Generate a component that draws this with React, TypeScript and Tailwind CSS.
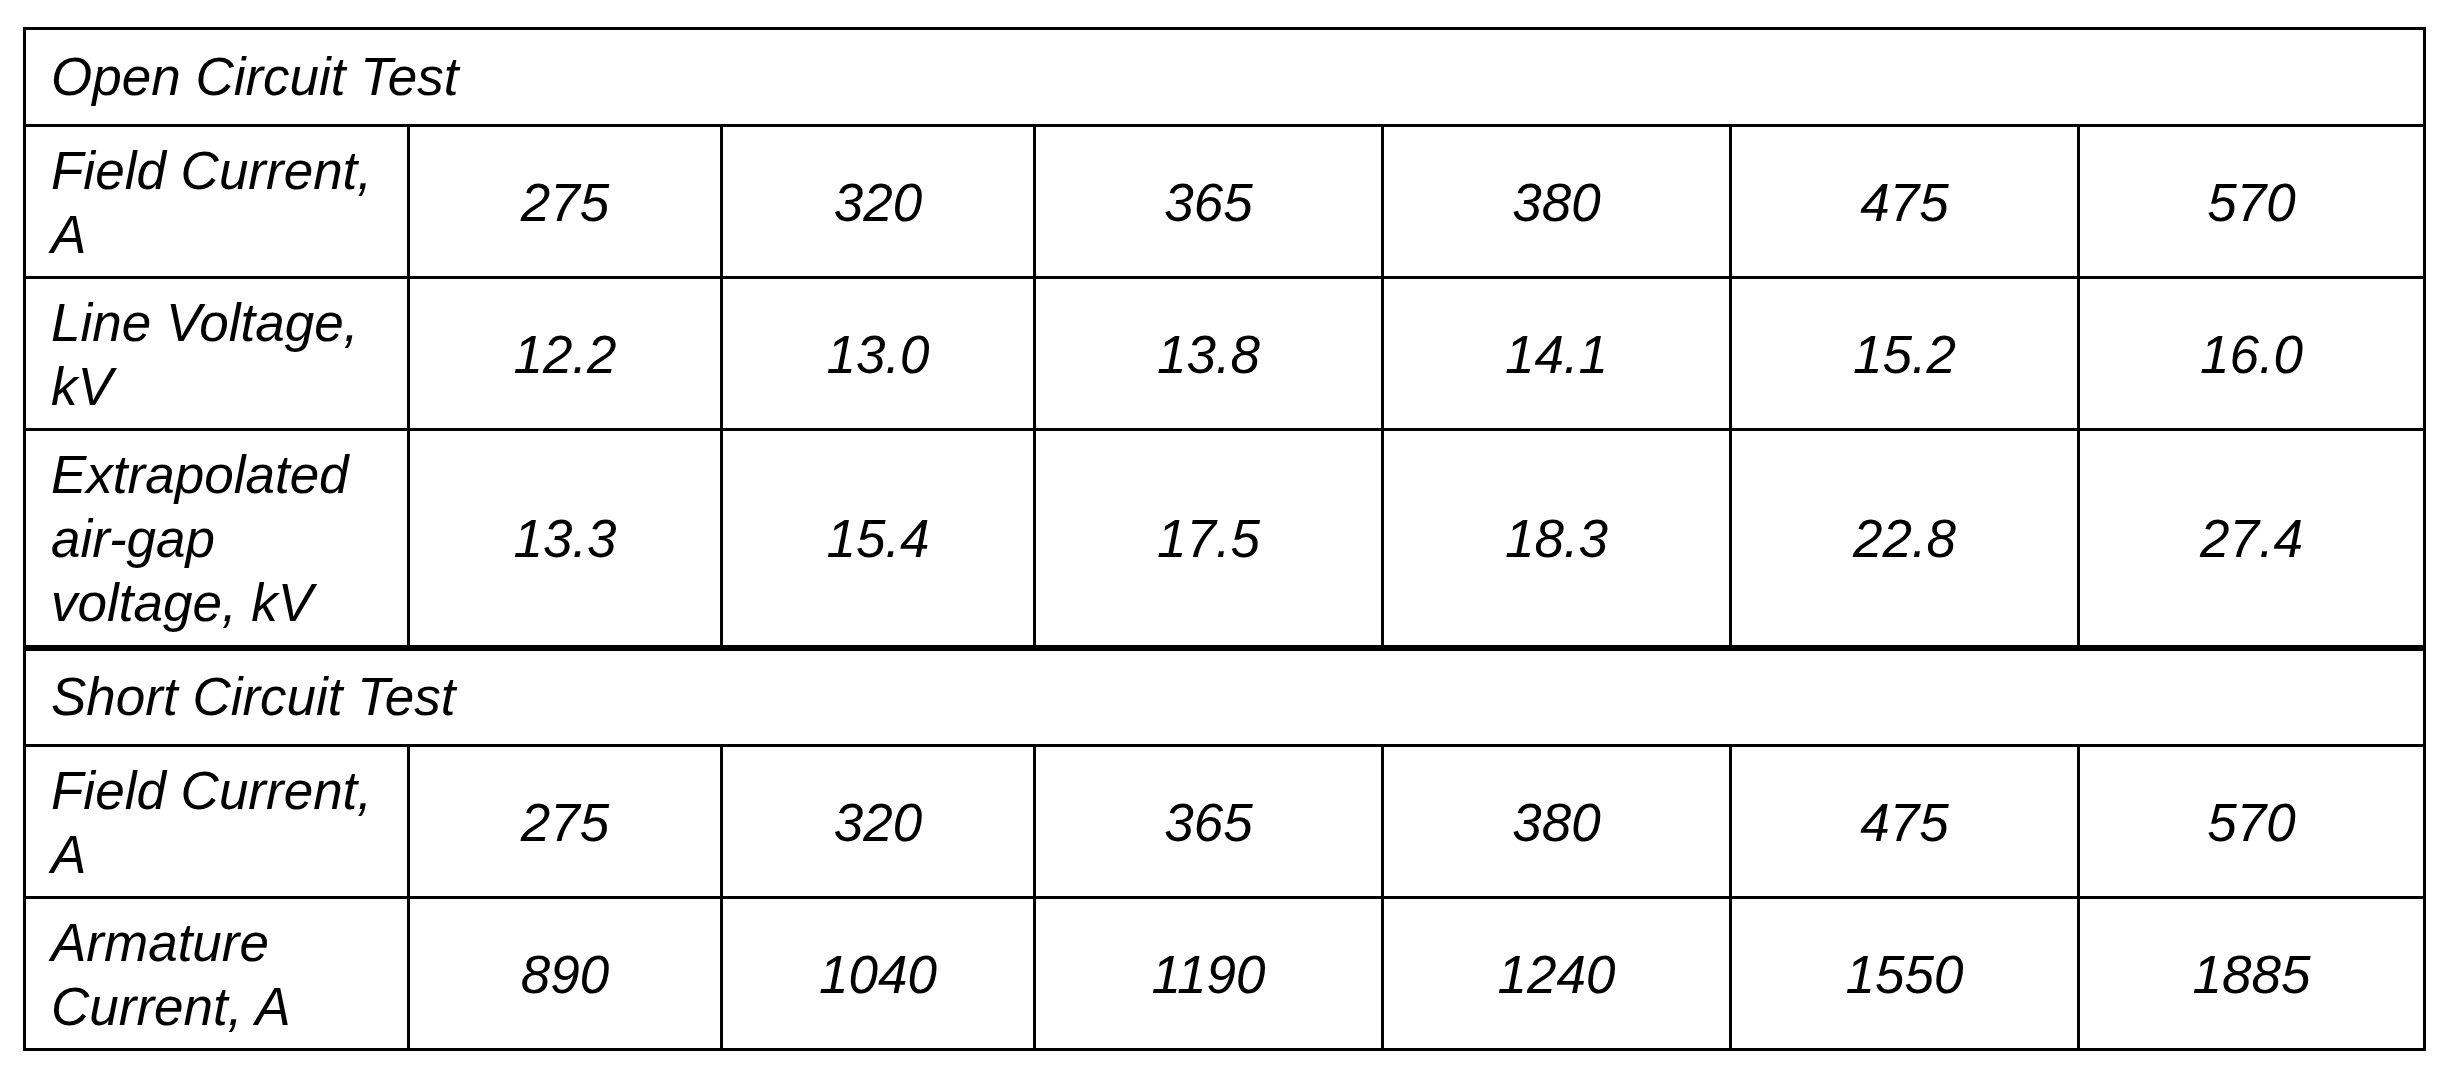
import React from "react";

type Row = { label: string; values: string[]; tall?: boolean };

const openRows: Row[] = [
  { label: "Field Current, A", values: ["275", "320", "365", "380", "475", "570"] },
  { label: "Line Voltage, kV", values: ["12.2", "13.0", "13.8", "14.1", "15.2", "16.0"] },
  {
    label: "Extrapolated air-gap voltage, kV",
    values: ["13.3", "15.4", "17.5", "18.3", "22.8", "27.4"],
    tall: true,
  },
];

const shortRows: Row[] = [
  { label: "Field Current, A", values: ["275", "320", "365", "380", "475", "570"] },
  { label: "Armature Current, A", values: ["890", "1040", "1190", "1240", "1550", "1885"] },
];

function DataRow({ row, thickBottom }: { row: Row; thickBottom?: boolean }) {
  return (
    <tr className={row.tall ? "h-[218px]" : "h-[152px]"}>
      <td
        className={`border-[3px] border-black px-[25px] pt-[3px] text-left align-middle ${
          thickBottom ? "border-b-[6px]" : ""
        }`}
      >
        {row.label}
      </td>
      {row.values.map((v, i) => (
        <td
          key={i}
          className={`border-[3px] border-black pt-[3px] text-center align-middle ${
            thickBottom ? "border-b-[6px]" : ""
          }`}
        >
          {v}
        </td>
      ))}
    </tr>
  );
}

function SectionHeader({ title, h }: { title: string; h: string }) {
  return (
    <tr className={h}>
      <td colSpan={7} className="border-[3px] border-black px-[25px] text-left align-middle">
        {title}
      </td>
    </tr>
  );
}

export default function App() {
  return (
    <div className="min-h-screen bg-white pt-[27px] pl-[23px]">
      <table
        className="table-fixed border-collapse w-[2400px] text-black italic text-[53px] leading-[64px]"
        style={{ fontFamily: '"Liberation Sans", Arial, sans-serif' }}
      >
        <colgroup>
          <col className="w-[384px]" />
          <col className="w-[313px]" />
          <col className="w-[313px]" />
          <col className="w-[348px]" />
          <col className="w-[348px]" />
          <col className="w-[348px]" />
          <col className="w-[346px]" />
        </colgroup>
        <tbody>
          <SectionHeader title="Open Circuit Test" h="h-[97px]" />
          {openRows.map((r, i) => (
            <DataRow key={r.label} row={r} thickBottom={i === openRows.length - 1} />
          ))}
          <SectionHeader title="Short Circuit Test" h="h-[98px]" />
          {shortRows.map((r) => (
            <DataRow key={r.label + "s"} row={r} />
          ))}
        </tbody>
      </table>
    </div>
  );
}
